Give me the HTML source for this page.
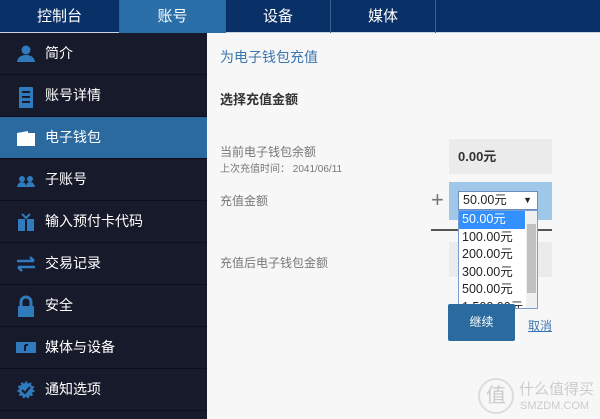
<!DOCTYPE html><html><head><meta charset="utf-8"><style>
*{margin:0;padding:0;box-sizing:border-box}
body{width:600px;height:419px;overflow:hidden;background:#f7f7f7;font-family:"Liberation Sans","Noto Sans CJK SC",sans-serif;position:relative}
.nav{position:absolute;left:0;top:0;width:600px;height:33px;background:#0a3068;border-bottom:1px solid #c8d4e0}
.tab{position:absolute;top:0;height:33px;line-height:33px;text-align:center;color:#fff;font-size:15px;border-right:1px solid #3a5f90}
.side{position:absolute;left:0;top:33px;width:207px;height:386px;background:#171a2a}
.row{height:42px;border-bottom:1px solid #0c0e18;color:#fff;font-size:14px;line-height:41px;padding-left:45px;position:relative}
.row.act{background:#2a6a9e}
.ic{position:absolute;left:16px;top:12px;width:20px;height:18px}
.a{position:absolute;font-size:12px;color:#777;white-space:nowrap}
.box{position:absolute;background:#ebebeb}
</style></head><body>
<div class="nav">
<div class="tab" style="left:0;width:120px">控制台</div>
<div class="tab" style="left:120px;width:106px;background:#2a6fa8">账号</div>
<div class="tab" style="left:226px;width:105px">设备</div>
<div class="tab" style="left:331px;width:105px">媒体</div>
</div>
<div class="side">
<div class="row"><svg class="ic" viewBox="0 0 20 18"><circle cx="10" cy="5" r="4.5" fill="#2f7bbd"/><path d="M1 17 Q2 10 10 10 Q18 10 19 17Z" fill="#2f7bbd"/></svg>简介</div>
<div class="row"><svg class="ic" viewBox="0 0 20 18" style="top:9px;height:24px"><rect x="3" y="0" width="14" height="24" rx="1" fill="#2f7bbd"/><rect x="6" y="4" width="8" height="2" fill="#171a2a"/><rect x="6" y="9" width="8" height="2" fill="#171a2a"/><rect x="6" y="14" width="8" height="2" fill="#171a2a"/></svg>账号详情</div>
<div class="row act"><svg class="ic" viewBox="0 0 20 18"><path d="M1 4 L12 2 L12 4 L19 4 L19 17 L1 17Z" fill="#fff"/></svg>电子钱包</div>
<div class="row"><svg class="ic" viewBox="0 0 20 18"><circle cx="6" cy="8" r="3" fill="#2f7bbd"/><circle cx="14" cy="8" r="3" fill="#2f7bbd"/><path d="M1 16 Q2 11 6 11 Q10 11 10 16Z M10 16 Q10 11 14 11 Q18 11 19 16Z" fill="#2f7bbd"/></svg>子账号</div>
<div class="row"><svg class="ic" viewBox="0 0 20 18"><rect x="2" y="6" width="16" height="12" fill="#2f7bbd"/><rect x="9" y="6" width="2" height="12" fill="#171a2a"/><path d="M6 1 L10 5 L14 1" stroke="#2f7bbd" stroke-width="2" fill="none"/></svg>输入预付卡代码</div>
<div class="row"><svg class="ic" viewBox="0 0 20 18"><path d="M1 6 H18 M14 2 L18 6 M19 12 H2 M6 16 L2 12" stroke="#2f7bbd" stroke-width="2.5" fill="none"/></svg>交易记录</div>
<div class="row"><svg class="ic" viewBox="0 0 20 18" style="top:8px;height:24px"><path d="M5 10 V6 A5 5 0 0 1 15 6 V10" stroke="#2f7bbd" stroke-width="3" fill="none"/><rect x="2" y="10" width="16" height="14" rx="1" fill="#2f7bbd"/></svg>安全</div>
<div class="row"><svg class="ic" viewBox="0 0 20 18"><rect x="0" y="3" width="20" height="11" fill="#2f7bbd"/><path d="M9 6 V12 M9 6 H12" stroke="#171a2a" stroke-width="2"/></svg>媒体与设备</div>
<div class="row"><svg class="ic" viewBox="0 0 20 18"><circle cx="10" cy="9" r="7" fill="#2f7bbd" stroke="#2f7bbd" stroke-dasharray="2 2" stroke-width="3"/><path d="M6 9 L9 12 L14 6" stroke="#171a2a" stroke-width="2" fill="none"/></svg>通知选项</div>
</div>
<div style="position:absolute;left:220px;top:47px;font-size:14px;color:#3a76b0">为电子钱包充值</div>
<div style="position:absolute;left:220px;top:89px;font-size:13px;font-weight:bold;color:#333">选择充值金额</div>
<div class="a" style="left:220px;top:143px">当前电子钱包余额</div>
<div class="a" style="left:220px;top:160px;font-size:10px">上次充值时间： 2041/06/11</div>
<div class="a" style="left:220px;top:192px">充值金额</div>
<div class="a" style="left:220px;top:254px">充值后电子钱包金额</div>
<div class="box" style="left:449px;top:139px;width:103px;height:35px;font-weight:bold;font-size:13px;color:#333;line-height:35px;padding-left:9px">0.00元</div>
<div style="position:absolute;left:449px;top:182px;width:103px;height:38px;background:#9fc8e8"></div>
<div style="position:absolute;left:431px;top:189px;font-size:22px;color:#777;line-height:22px">+</div>
<div style="position:absolute;left:458px;top:191px;width:80px;height:19px;background:#fff;border:1px solid #6a8cc0;font-size:12.5px;line-height:17px;padding-left:4px;color:#222">50.00元<span style="position:absolute;right:5px;font-size:9px">▼</span></div>
<div style="position:absolute;left:431px;top:229px;width:121px;height:2px;background:#555"></div>
<div class="box" style="left:449px;top:242px;width:103px;height:35px"></div>
<div style="position:absolute;left:458px;top:210px;width:80px;height:99px;background:#fff;border:1px solid #7a9cd0;overflow:hidden;font-size:12.5px;color:#222;line-height:17.5px">
<div style="background:#3390ff;color:#fff;padding-left:3px;width:66px">50.00元</div>
<div style="padding-left:3px">100.00元</div><div style="padding-left:3px">200.00元</div><div style="padding-left:3px">300.00元</div><div style="padding-left:3px">500.00元</div><div style="padding-left:3px">1,500.00元</div>
<div style="position:absolute;right:0;top:0;width:11px;height:97px;background:#f0f0f0"><div style="position:absolute;left:1px;top:13px;width:9px;height:69px;background:#c0c0c0"></div></div>
</div>
<div style="position:absolute;left:448px;top:304px;width:67px;height:37px;background:#2a6a9e;border-radius:2px;color:#fff;font-size:12px;text-align:center;line-height:37px">继续</div>
<div style="position:absolute;left:528px;top:317px;font-size:12px;color:#3a76b0;text-decoration:underline">取消</div>
<div style="position:absolute;left:478px;top:378px;width:36px;height:36px;border:2px solid #ddd;border-radius:50%;color:#ccc;font-size:20px;text-align:center;line-height:32px">值</div>
<div style="position:absolute;left:519px;top:378px;font-size:15px;color:#ccc;white-space:nowrap">什么值得买</div>
<div style="position:absolute;left:520px;top:400px;font-size:11px;color:#ccc;white-space:nowrap">SMZDM.COM</div>
</body></html>
